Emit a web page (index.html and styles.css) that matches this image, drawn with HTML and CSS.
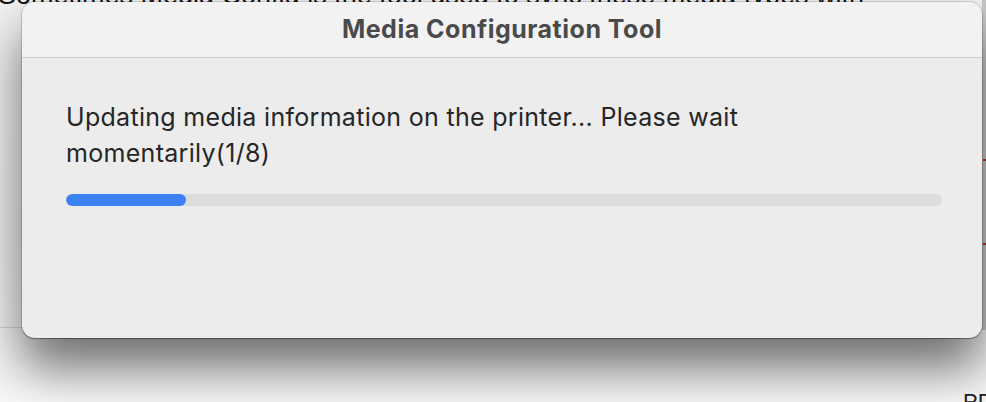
FILE: index.html
```html
<!DOCTYPE html>
<html>
<head>
<meta charset="utf-8">
<link rel="stylesheet" href="styles.css">
</head>
<body>
<div class="page">
  <p class="doc-line">Sometimes Media Config is the tool used to sync these media types with</p>
  <div class="left-rule"></div>
  <div class="right-edge"><span class="mark m1"></span><span class="mark m2"></span></div>
  <p class="doc-corner">PD</p>
</div>
<div class="sheet">
  <div class="titlebar">Media Configuration Tool</div>
  <div class="content">
    <p class="message">Updating media information on the printer... Please wait momentarily(1/8)</p>
    <div class="progress"><div class="fill" style="width:120px"></div></div>
  </div>
</div>
</body>
</html>
```
FILE: styles.css
```css
html, body {
  margin: 0;
  padding: 0;
}
body {
  width: 986px;
  height: 402px;
  overflow: hidden;
  position: relative;
  background: #f4f4f4;
  font-family: Inter, "Liberation Sans", sans-serif;
}
.page {
  position: relative;
  width: 986px;
  height: 402px;
  background: linear-gradient(180deg, #f1f1f1 0%, #ececec 60%, #f8f8f8 100%);
}
.doc-line {
  margin: 0;
  position: absolute;
  left: -2px;
  top: -20px;
  font-family: "Liberation Sans", sans-serif;
  font-size: 27px;
  color: #111;
  white-space: nowrap;
}
.left-rule {
  position: absolute;
  left: 0;
  top: 327px;
  width: 30px;
  height: 1px;
  background: #d4d4d4;
}
.right-edge {
  position: absolute;
  left: 982px;
  top: 0;
  width: 4px;
  height: 330px;
  background: #c9c9c9;
}
.mark {
  position: absolute;
  left: 1px;
  width: 3px;
  height: 2px;
  background: #b83030;
}
.m1 { top: 159px; }
.m2 { top: 243px; }
.doc-corner {
  margin: 0;
  position: absolute;
  left: 963px;
  top: 389px;
  font-family: "Liberation Sans", sans-serif;
  font-size: 22px;
  color: #222;
}
.sheet {
  position: absolute;
  left: 22px;
  top: 2px;
  width: 960px;
  height: 336px;
  border-radius: 13px;
  background: #ececec;
  overflow: hidden;
  box-shadow: 0 0 0 1px rgba(0,0,0,0.14), 0 1px 1px rgba(0,0,0,0.3), 0 30px 50px rgba(0,0,0,0.55);
  display: flex;
  flex-direction: column;
}
.titlebar {
  height: 56px;
  flex: none;
  box-sizing: border-box;
  background: #f2f2f2;
  border-bottom: 1px solid #cdcdcd;
  display: flex;
  align-items: center;
  justify-content: center;
  font-size: 25px;
  letter-spacing: 0.5px;
  font-weight: 700;
  color: #4a4a4a;
  padding-bottom: 1px;
}
.content {
  padding: 41px 40px 0 44px;
}
.message {
  margin: 0;
  width: 760px;
  font-size: 25px;
  letter-spacing: 0.3px;
  line-height: 36px;
  color: #262626;
}
.progress {
  margin-top: 23px;
  height: 12px;
  border-radius: 6px;
  background: #dcdcdc;
  overflow: hidden;
}
.fill {
  height: 100%;
  border-radius: 6px;
  background: #3a82f6;
}
```
